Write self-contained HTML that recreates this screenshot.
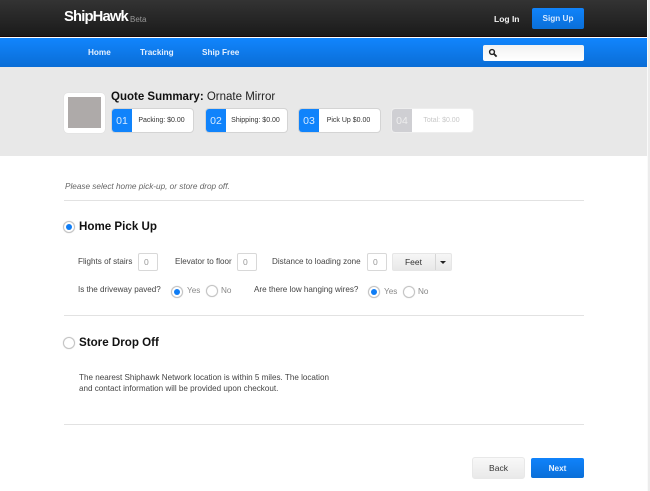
<!DOCTYPE html>
<html>
<head>
<meta charset="utf-8">
<style>
html,body{margin:0;padding:0;background:#fff}
#p{position:relative;width:650px;height:491px;overflow:hidden;background:#fff;font-family:"Liberation Sans",Arial,sans-serif;filter:blur(.35px)}
#p div{position:absolute;box-sizing:border-box;white-space:nowrap}
.t{color:#444;font-size:8.1px;line-height:12px}
.step{height:25px;top:108px;background:#fff;border-radius:4px;border:1px solid #d4d4d4;overflow:hidden}
.num{left:0;top:0;width:20px;height:23px;background:#1083fb;color:#d8ebff;font-size:10.5px;line-height:24px;text-align:center}
.lab{left:18px;right:0;top:0;height:23px;line-height:24px;font-size:7px;color:#333;text-align:center}
.hr{left:64px;width:520px;height:1px;background:#e2e2e2}
.in{width:20px;height:18px;background:#fff;border:1px solid #d8d8d8;border-radius:2px;color:#999;font-size:8.5px;line-height:17px;padding-left:5px}
.r{width:12px;height:12px;border-radius:50%;background:#fff;border:1px solid #c4c4c4;box-shadow:0 0 1px #ccc}
.r.on:after{content:"";position:absolute;left:2px;top:2px;width:6px;height:6px;border-radius:50%;background:#0f7df5}
.h{font-size:11.6px;font-weight:bold;color:#111;line-height:14px}
.o{color:#888;font-size:8.2px;line-height:12px}
.n{font-size:8.2px;font-weight:bold;color:#e4f0ff;line-height:12px;top:47px}
</style>
</head>
<body>
<div id="p">
  <div style="left:0;top:0;width:650px;height:37px;background:linear-gradient(#333,#1a1a1a);border-bottom:1px solid #1a0805"></div>
  <div style="left:64px;top:8px;font-size:14.8px;font-weight:bold;color:#fff;letter-spacing:-.85px;line-height:18px">ShipHawk</div>
  <div style="left:130px;top:14px;font-size:8px;color:#999;line-height:11px">Beta</div>
  <div style="left:494px;top:13px;font-size:8.5px;font-weight:bold;color:#f2f2f2;line-height:12px">Log In</div>
  <div style="left:532px;top:8px;width:52px;height:21px;background:linear-gradient(#1083fb,#0a6fd8);border-radius:2px;color:#d5e8ff;font-size:8.2px;font-weight:bold;line-height:21px;text-align:center">Sign Up</div>

  <div style="left:0;top:38px;width:650px;height:29.5px;background:linear-gradient(#1185fd,#0a6cd4)"></div>
  <div class="n" style="left:88px">Home</div>
  <div class="n" style="left:140px">Tracking</div>
  <div class="n" style="left:202px">Ship Free</div>
  <div style="left:483px;top:45px;width:101px;height:16px;background:linear-gradient(#f2f2f2,#fff);border-radius:2px"></div>
  <svg style="position:absolute;left:488px;top:48px" width="10" height="10" viewBox="0 0 10 10"><circle cx="4" cy="4" r="2.4" fill="none" stroke="#222" stroke-width="1.4"/><path d="M5.8 5.8L8.6 8.6" stroke="#222" stroke-width="1.8"/></svg>

  <div style="left:0;top:67px;width:650px;height:89px;background:#e8e8e8"></div>
  <div style="left:64px;top:93px;width:41px;height:40px;background:#fff;border-radius:4px;box-shadow:0 0 1px #ccc"></div>
  <div style="left:68px;top:97px;width:33px;height:31px;background:#aeaaa9"></div>
  <div style="left:111px;top:90px;font-size:11.5px;line-height:15px;color:#222"><b style="color:#111">Quote Summary:</b> Ornate Mirror</div>

  <div class="step" style="left:111px;width:83px"><div class="num">01</div><div class="lab">Packing: $0.00</div></div>
  <div class="step" style="left:205px;width:83px"><div class="num">02</div><div class="lab">Shipping: $0.00</div></div>
  <div class="step" style="left:298px;width:83px"><div class="num">03</div><div class="lab">Pick Up $0.00</div></div>
  <div class="step" style="left:391px;width:83px;border-color:#eee"><div class="num" style="background:#cfcfd3;color:#eee">04</div><div class="lab" style="color:#c8c8c8">Total: $0.00</div></div>

  <div style="left:647px;top:0;width:1px;height:491px;background:#fafafa"></div>
  <div style="left:648px;top:0;width:2px;height:491px;background:#ececec"></div>

  <div style="left:65px;top:181px;font-size:8.2px;font-style:italic;color:#666;line-height:12px">Please select home pick-up, or store drop off.</div>
  <div class="hr" style="top:200px"></div>

  <div class="r on" style="left:63px;top:221px"></div>
  <div class="h" style="left:79px;top:220px">Home Pick Up</div>

  <div class="t" style="left:78px;top:256px">Flights of stairs</div>
  <div class="in" style="left:138px;top:253px">0</div>
  <div class="t" style="left:175px;top:256px">Elevator to floor</div>
  <div class="in" style="left:237px;top:253px">0</div>
  <div class="t" style="left:272px;top:256px">Distance to loading zone</div>
  <div class="in" style="left:367px;top:253px">0</div>
  <div style="left:392px;top:253px;width:60px;height:18px;background:linear-gradient(#f6f6f6,#e8e8e8);border:1px solid #e6e6e6;border-radius:2px"></div>
  <div style="left:435px;top:254px;width:1px;height:16px;background:#d6d6d6"></div>
  <div style="left:392px;top:256px;width:43px;text-align:center;font-size:8.5px;line-height:12px;color:#333">Feet</div>
  <div style="left:440px;top:261px;width:0;height:0;border-left:3px solid transparent;border-right:3px solid transparent;border-top:3px solid #222"></div>

  <div class="t" style="left:78px;top:284px">Is the driveway paved?</div>
  <div class="r on" style="left:171px;top:286px"></div>
  <div class="o" style="left:187px;top:285px">Yes</div>
  <div class="r" style="left:206px;top:285px"></div>
  <div class="o" style="left:221px;top:285px">No</div>
  <div class="t" style="left:254px;top:284px">Are there low hanging wires?</div>
  <div class="r on" style="left:368px;top:286px"></div>
  <div class="o" style="left:384px;top:286px">Yes</div>
  <div class="r" style="left:403px;top:286px"></div>
  <div class="o" style="left:418px;top:286px">No</div>

  <div class="hr" style="top:315px"></div>

  <div class="r" style="left:63px;top:337px"></div>
  <div class="h" style="left:79px;top:336px">Store Drop Off</div>
  <div class="t" style="left:79px;top:372px">The nearest Shiphawk Network location is within 5 miles. The location</div>
  <div class="t" style="left:79px;top:383px">and contact information will be provided upon checkout.</div>

  <div class="hr" style="top:424px"></div>

  <div style="left:472px;top:457px;width:53px;height:22px;background:linear-gradient(#f8f8f8,#e9e9e9);border:1px solid #e8e8e8;border-radius:3px;color:#333;font-size:8.5px;line-height:20px;text-align:center">Back</div>
  <div style="left:531px;top:458px;width:53px;height:20px;background:linear-gradient(#1083fb,#0a6fd8);border-radius:2px;color:#e8f2ff;font-size:8.2px;font-weight:bold;line-height:21px;text-align:center">Next</div>
</div>
</body>
</html>
